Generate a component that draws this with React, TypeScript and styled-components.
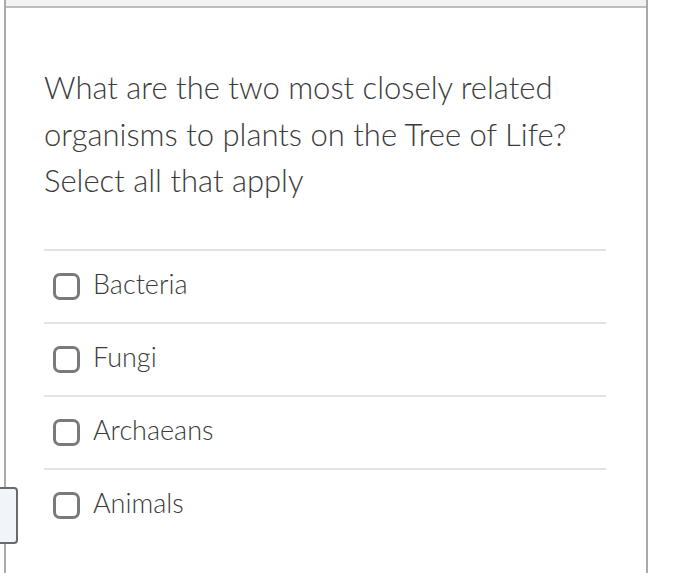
import { ReactElement } from 'react'
import styled, { createGlobalStyle } from 'styled-components'

const TEXT = '#3b3b3b'
const FRAME = '#a9a9a9'
const DIVIDER = '#e3e3e3'
const BOX = '#7a7a7a'

const GlobalStyle = createGlobalStyle`
  html, body {
    margin: 0;
    padding: 0;
    background: #fff;
    font-family: Lato, 'Open Sans', sans-serif;
    overflow: hidden;
  }
`

const Page = styled.div`
  position: relative;
  height: 573px;
  overflow: hidden;
`

const Card = styled.div`
  margin-left: 4px;
  width: 640px;
  height: 600px;
  border-left: 2px solid ${FRAME};
  border-right: 2px solid ${FRAME};
  display: flex;
  flex-direction: column;
`

const CardHeader = styled.div`
  height: 6px;
  background: #f2f2f2;
  border-bottom: 2px solid #bdbdbd;
`

const CardBody = styled.div`
  padding: 56px 40px 0 38px;
`

const Question = styled.p`
  margin: 0 0 45px;
  font-size: 31px;
  font-weight: 300;
  line-height: 46.5px;
  color: ${TEXT};
`

const OptionList = styled.ul`
  list-style: none;
  margin: 0;
  padding: 0;
`

const OptionRow = styled.li`
  display: flex;
  align-items: center;
  gap: 13px;
  height: 71px;
  padding-left: 9px;
  border-top: 2px solid ${DIVIDER};
`

const Box = styled.span`
  box-sizing: border-box;
  width: 27px;
  height: 27px;
  border: 3px solid ${BOX};
  border-radius: 7px;
  background: #fff;
  flex: none;
`

const OptionLabel = styled.span`
  font-size: 27px;
  font-weight: 300;
  color: ${TEXT};
  padding-bottom: 5px;
`

const SideTab = styled.div`
  position: absolute;
  left: -4px;
  top: 487px;
  width: 22px;
  height: 57px;
  box-sizing: border-box;
  border: 2px solid #6a6a6a;
  border-radius: 4px;
  background: #f1f5fa;
`

const options = ['Bacteria', 'Fungi', 'Archaeans', 'Animals']

const App = (): ReactElement => (
  <Page>
    <GlobalStyle />
    <Card>
      <CardHeader />
      <CardBody>
        <Question>
          What are the two most closely related organisms to plants on the
          Tree of Life? Select all that apply
        </Question>
        <OptionList>
          {options.map((label) => (
            <OptionRow key={label}>
              <Box role="checkbox" aria-checked="false" />
              <OptionLabel>{label}</OptionLabel>
            </OptionRow>
          ))}
        </OptionList>
      </CardBody>
    </Card>
    <SideTab />
  </Page>
)

export default App
